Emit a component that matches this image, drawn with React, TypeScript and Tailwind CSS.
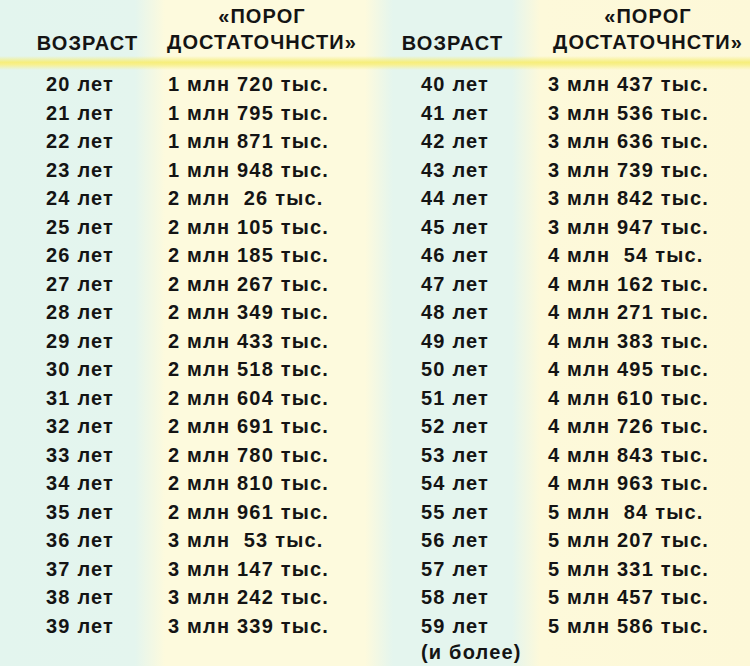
const left: [string, string][] = [
  ['20 лет', '1 млн 720 тыс.'],
  ['21 лет', '1 млн 795 тыс.'],
  ['22 лет', '1 млн 871 тыс.'],
  ['23 лет', '1 млн 948 тыс.'],
  ['24 лет', '2 млн  26 тыс.'],
  ['25 лет', '2 млн 105 тыс.'],
  ['26 лет', '2 млн 185 тыс.'],
  ['27 лет', '2 млн 267 тыс.'],
  ['28 лет', '2 млн 349 тыс.'],
  ['29 лет', '2 млн 433 тыс.'],
  ['30 лет', '2 млн 518 тыс.'],
  ['31 лет', '2 млн 604 тыс.'],
  ['32 лет', '2 млн 691 тыс.'],
  ['33 лет', '2 млн 780 тыс.'],
  ['34 лет', '2 млн 810 тыс.'],
  ['35 лет', '2 млн 961 тыс.'],
  ['36 лет', '3 млн  53 тыс.'],
  ['37 лет', '3 млн 147 тыс.'],
  ['38 лет', '3 млн 242 тыс.'],
  ['39 лет', '3 млн 339 тыс.'],
];

const right: [string, string][] = [
  ['40 лет', '3 млн 437 тыс.'],
  ['41 лет', '3 млн 536 тыс.'],
  ['42 лет', '3 млн 636 тыс.'],
  ['43 лет', '3 млн 739 тыс.'],
  ['44 лет', '3 млн 842 тыс.'],
  ['45 лет', '3 млн 947 тыс.'],
  ['46 лет', '4 млн  54 тыс.'],
  ['47 лет', '4 млн 162 тыс.'],
  ['48 лет', '4 млн 271 тыс.'],
  ['49 лет', '4 млн 383 тыс.'],
  ['50 лет', '4 млн 495 тыс.'],
  ['51 лет', '4 млн 610 тыс.'],
  ['52 лет', '4 млн 726 тыс.'],
  ['53 лет', '4 млн 843 тыс.'],
  ['54 лет', '4 млн 963 тыс.'],
  ['55 лет', '5 млн  84 тыс.'],
  ['56 лет', '5 млн 207 тыс.'],
  ['57 лет', '5 млн 331 тыс.'],
  ['58 лет', '5 млн 457 тыс.'],
  ['59 лет', '5 млн 586 тыс.'],
];

export default function App() {
  return (
    <div
      className="h-[666px] w-[750px] overflow-hidden text-[#141414] font-bold bg-[linear-gradient(to_right,#e3f5ee_0px,#e4f5ee_135px,#fdfadd_165px,#fdfadd_365px,#e4f5ee_393px,#e4f5ee_512px,#fdf9da_540px,#fdf8d8_750px)]"
      style={{ fontFamily: '"Liberation Sans", Arial, sans-serif' }}
    >
      {/* Header */}
      <div className="grid h-[56px] grid-cols-[155px_225px_145px_225px] pt-[3px] text-[20px] leading-[26px] tracking-[1.1px]">
        <div className="self-end pl-[20px] text-center">ВОЗРАСТ</div>
        <div className="pr-[11px] text-center">
          <div>«ПОРОГ</div>
          <div>ДОСТАТОЧНСТИ»</div>
        </div>
        <div className="self-end text-center">ВОЗРАСТ</div>
        <div className="pl-[21px] text-center">
          <div>«ПОРОГ</div>
          <div>ДОСТАТОЧНСТИ»</div>
        </div>
      </div>

      {/* Yellow stripe */}
      <div className="h-[14px] bg-[linear-gradient(to_bottom,rgba(247,239,122,0)_0%,#f6ee7c_45%,#f8f08c_60%,rgba(247,239,122,0)_100%)]" />

      {/* Rows */}
      <div className="grid grid-cols-[155px_225px_145px_225px] text-[20px] leading-[28.5px] tracking-[1.2px]">
        <div className="pl-[46px]">
          {left.map(([a]) => (
            <div key={a}>{a}</div>
          ))}
        </div>
        <div className="pl-[13px]">
          {left.map(([a, v]) => (
            <div key={a} className="whitespace-pre">{v}</div>
          ))}
        </div>
        <div className="pl-[41px]">
          {right.map(([a]) => (
            <div key={a}>{a}</div>
          ))}
          <div className="leading-[24px]">(и более)</div>
        </div>
        <div className="pl-[23px]">
          {right.map(([a, v]) => (
            <div key={a} className="whitespace-pre">{v}</div>
          ))}
        </div>
      </div>
    </div>
  );
}
